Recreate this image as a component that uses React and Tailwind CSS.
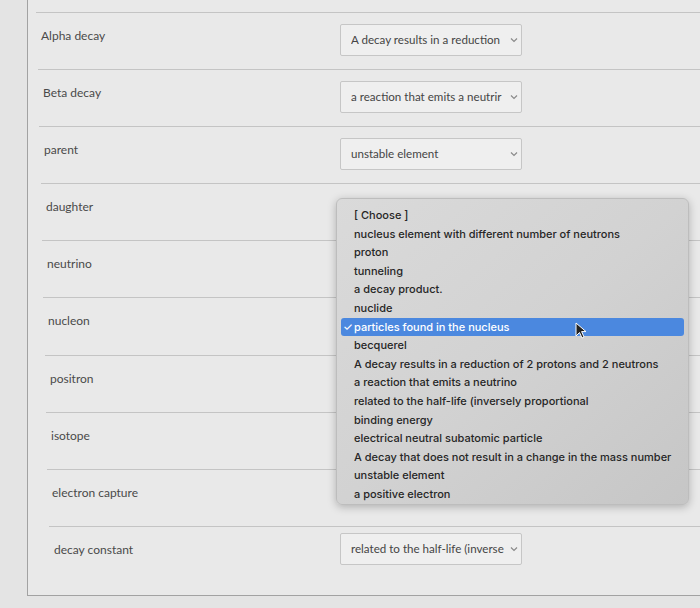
import React from "react";

const rows = [
  { label: "Alpha decay", value: "A decay results in a reduction", ml: "ml-[8px]", w: "w-[304px]", st: "pt-[11px]" },
  { label: "Beta decay", value: "a reaction that emits a neutrir", ml: "ml-[10px]", w: "w-[302px]", st: "pt-[11px]" },
  { label: "parent", value: "unstable element", ml: "ml-[11px]", w: "w-[301px]", st: "pt-[11px]" },
  { label: "daughter", value: null, ml: "ml-[13px]", w: "w-[299px]", st: "pt-[11px]" },
  { label: "neutrino", value: null, ml: "ml-[14px]", w: "w-[298px]", st: "pt-[11px]" },
  { label: "nucleon", value: null, ml: "ml-[15px]", w: "w-[297px]", st: "pt-[11px]" },
  { label: "positron", value: null, ml: "ml-[17px]", w: "w-[295px]", st: "pt-[11px]" },
  { label: "isotope", value: null, ml: "ml-[18px]", w: "w-[294px]", st: "pt-[11px]" },
  { label: "electron capture", value: null, ml: "ml-[19px]", w: "w-[293px]", st: "pt-[11px]" },
  { label: "decay constant", value: "related to the half-life (inverse", ml: "ml-[21px]", w: "w-[291px]", st: "pt-[6px]" },
];

const options = [
  "[ Choose ]",
  "nucleus element with different number of neutrons",
  "proton",
  "tunneling",
  "a decay product.",
  "nuclide",
  "particles found in the nucleus",
  "becquerel",
  "A decay results in a reduction of 2 protons and 2 neutrons",
  "a reaction that emits a neutrino",
  "related to the half-life (inversely proportional",
  "binding energy",
  "electrical neutral subatomic particle",
  "A decay that does not result in a change in the mass number",
  "unstable element",
  "a positive electron",
];

function Chevron() {
  return (
    <svg width="8" height="6" viewBox="0 0 8 6" className="shrink-0">
      <path d="M1 1.5 L4 4.5 L7 1.5" fill="none" stroke="#8a8a8a" strokeWidth="1.2" />
    </svg>
  );
}

function Select({ value }) {
  return (
    <div className="w-[182px] h-[32px] border border-[#c6c6c6] bg-[#efefef] rounded-[2px] flex items-center pl-[10px] pr-[3px]">
      <span className="w-[155px] whitespace-nowrap overflow-hidden text-[11.6px] text-[#454545]">{value}</span>
      <span className="flex-1" />
      <Chevron />
    </div>
  );
}

export default function App() {
  return (
    <div className="relative w-[700px] h-[608px] overflow-hidden bg-[#e4e4e4] font-['Lato',sans-serif]">
      <div className="ml-[27px] w-[673px] h-[596px] border-l border-b border-[#a2a2a2] bg-[#e9e9e9] pt-[12px]">
        {rows.map((r, i) => (
          <div key={i} className={`${r.ml} h-[57.1px] border-t border-[#c4c4c4] flex items-start`}>
            <div className={`${r.w} pl-[5px] pt-[15px] text-[12px] leading-[16px] text-[#4a4a4a]`}>{r.label}</div>
            {r.value && (
              <div className={r.st}>
                <Select value={r.value} />
              </div>
            )}
          </div>
        ))}
      </div>

      <div className="absolute left-[336px] top-[198px] w-[353px] h-[307px] rounded-[6px] bg-gradient-to-br from-[#dadada] via-[#d2d2d2] to-[#c6c6c6] shadow-[0_2px_8px_rgba(0,0,0,0.25)] border border-[#bdbdbd] pt-[7px] px-[4px] font-['Inter',sans-serif]">
        {options.map((o, i) =>
          i === 6 ? (
            <div key={i} className="h-[18.6px] flex items-center rounded-[3px] bg-[#4b88df] text-white text-[11px] font-medium">
              <span className="w-[13px] pl-[2px] text-[11px]">✓</span>
              <span>{o}</span>
            </div>
          ) : (
            <div key={i} className="h-[18.6px] flex items-center pl-[13px] text-[11px] font-medium text-[#262626] whitespace-nowrap">
              {o}
            </div>
          )
        )}
      </div>

      <svg className="absolute left-[575px] top-[322px]" width="12" height="18" viewBox="0 0 12 18">
        <path d="M1 1 L1 14 L4.5 10.5 L7 16 L9 15 L6.6 9.6 L11 9.6 Z" fill="#222" stroke="#fff" strokeWidth="1" />
      </svg>
    </div>
  );
}
